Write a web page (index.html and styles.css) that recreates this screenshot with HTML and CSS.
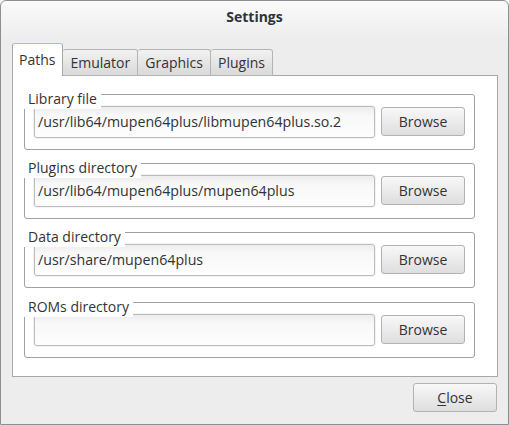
FILE: index.html
```html
<!DOCTYPE html>
<html>
<head>
<meta charset="utf-8">
<link rel="stylesheet" href="styles.css">
</head>
<body>
<div class="window">
  <div class="titlebar">Settings</div>
  <div class="body">
    <div class="tabs">
      <div class="tab active">Paths</div>
      <div class="tab">Emulator</div>
      <div class="tab">Graphics</div>
      <div class="tab">Plugins</div>
    </div>
    <div class="panel">
      <div class="group">
        <span class="legend">Library file</span>
        <div class="entry">/usr/lib64/mupen64plus/libmupen64plus.so.2</div>
        <button class="btn browse">Browse</button>
      </div>
      <div class="group">
        <span class="legend">Plugins directory</span>
        <div class="entry">/usr/lib64/mupen64plus/mupen64plus</div>
        <button class="btn browse">Browse</button>
      </div>
      <div class="group">
        <span class="legend">Data directory</span>
        <div class="entry">/usr/share/mupen64plus</div>
        <button class="btn browse">Browse</button>
      </div>
      <div class="group">
        <span class="legend">ROMs directory</span>
        <div class="entry"></div>
        <button class="btn browse">Browse</button>
      </div>
    </div>
    <div class="footer">
      <button class="btn close"><u>C</u>lose</button>
    </div>
  </div>
</div>
</body>
</html>
```

FILE: styles.css
```css
* { box-sizing: border-box; }
html, body {
  margin: 0;
  padding: 0;
  background: #ffffff;
}
body {
  font-family: "Open Sans", "Noto Sans", sans-serif;
  font-size: 14px;
  color: #2e3436;
}
.window {
  width: 509px;
  height: 425px;
  border: 1px solid #8e8e8e;
  border-radius: 6px 6px 0 0;
  background: linear-gradient(to bottom, #fafafa 0px, #ededed 40px, #ededed 100%);
  overflow: hidden;
}
.titlebar {
  height: 42px;
  text-align: center;
  font-weight: bold;
  font-size: 14px;
  line-height: 31px;
  color: #2e3436;
}
.body {
  padding: 0 10px 0 11px;
}
.tabs {
  display: flex;
  align-items: flex-end;
  height: 33px;
  position: relative;
  z-index: 1;
  margin-bottom: -1px;
}
.tab {
  height: 27px;
  padding: 0 7px;
  line-height: 25px;
  border: 1px solid #b4b4b4;
  border-left: none;
  border-radius: 3px 3px 0 0;
  background: linear-gradient(to bottom, #f2f2f2, #d9d9d9);
  color: #333;
}
.tab.active {
  height: 33px;
  line-height: 32px;
  border-left: 1px solid #a8a8a8;
  border-color: #a8a8a8;
  border-top-color: #9fc1e6;
  border-bottom: none;
  background: #ffffff;
  padding: 0 7px 0 6px;
}
.panel {
  height: 302px;
  border: 1px solid #a8a8a8;
  background: #ffffff;
  padding: 18px 22px 0 11px;
  display: flex;
  flex-direction: column;
  gap: 13px;
}
.group {
  position: relative;
  height: 56px;
  border: 1px solid #a0a0a0;
  border-radius: 3px;
  padding: 11px 9px 0 9px;
  display: flex;
  align-items: flex-start;
  gap: 6px;
}
.group:nth-child(4) { margin-top: 1px; }
.legend {
  position: absolute;
  left: -2px;
  top: -6px;
  height: 20px;
  line-height: 19px;
  padding: 0 4px 0 5px;
  background: #ffffff;
  color: #333;
}
.entry {
  width: 341px;
  height: 32px;
  border: 1px solid #bcbcbc;
  border-radius: 3px;
  background: linear-gradient(to bottom, #ececec 0px, #f8f8f8 8px, #fdfdfd 100%);
  box-shadow: 0 0 0 1px #f3f3f3;
  padding: 0 3px;
  line-height: 30px;
  font-size: 14.2px;
  white-space: nowrap;
  overflow: hidden;
  color: #2e3436;
}
.btn {
  font-family: "Open Sans", "Noto Sans", sans-serif;
  font-size: 14px;
  color: #333;
  border: 1px solid #b2b2b2;
  border-radius: 3px;
  background: linear-gradient(to bottom, #f8f8f8, #dedede);
  padding: 0;
  margin: 0;
}
.browse {
  width: 84px;
  height: 29px;
  margin-top: 1px;
}
.footer {
  display: flex;
  justify-content: flex-end;
  padding: 6px 1px 0 0;
}
.close {
  width: 84px;
  height: 29px;
}
.close u {
  text-decoration: underline;
  text-underline-offset: 2px;
}
```
